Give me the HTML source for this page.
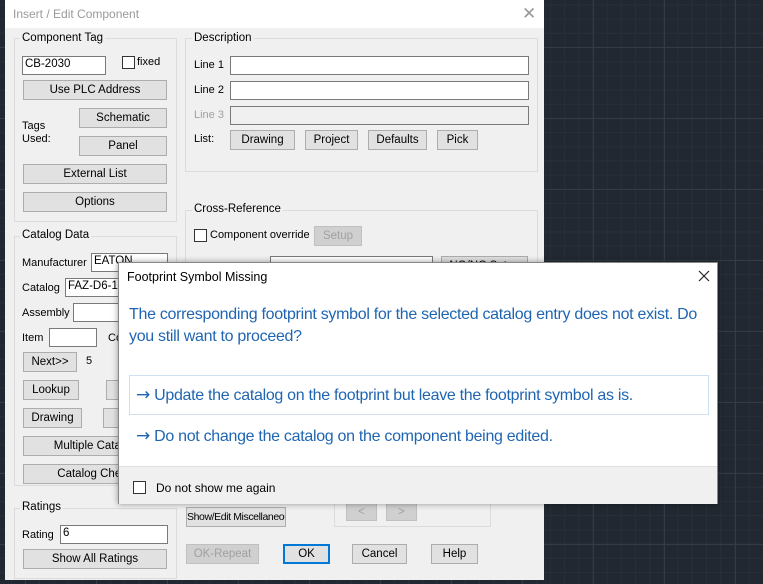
<!DOCTYPE html>
<html><head><meta charset="utf-8"><style>
*{box-sizing:border-box;margin:0;padding:0}
body{width:763px;height:584px;overflow:hidden;position:relative;font-family:"Liberation Sans",sans-serif;font-size:11px;color:#000;
background-color:#222831;
background-image:linear-gradient(#333b46 1px,transparent 1px),linear-gradient(90deg,#333b46 1px,transparent 1px),linear-gradient(#282f38 1px,transparent 1px),linear-gradient(90deg,#282f38 1px,transparent 1px);
background-size:71px 71px,71px 71px,14.2px 14.2px,14.2px 14.2px;background-position:0 47px,25px 0,0 47px,25px 0}
.a{position:absolute;white-space:nowrap}
#main{position:absolute;left:5px;top:0;width:539px;height:580px;background:#f0f0f0}
.tb{position:absolute;left:5px;top:0;width:539px;height:28px;background:#fff}
.grp{position:absolute;border:1px solid #dcdcdc}
.gl{position:absolute;background:#f0f0f0;padding:0 2px;font-size:11.5px}
.in{position:absolute;background:#fff;border:1px solid #7a7a7a;height:19px;padding:1px 2px;font-size:11.5px;overflow:hidden;white-space:nowrap}
.bt{position:absolute;background:#e1e1e1;border:1px solid #adadad;height:20px;text-align:center;line-height:18px;font-size:11.5px;white-space:nowrap;overflow:hidden}
.dis{color:#a0a0a0;background:#d0d0d0;border-color:#c0c0c0}
.cb{position:absolute;width:13px;height:13px;border:1px solid #333;background:#fff}
#pop{position:absolute;left:118px;top:262px;width:600px;height:242px;background:#fff;border:1px solid #888;box-shadow:0 0 6px rgba(0,0,0,.4)}
.bl{color:#1f65b2;font-size:16px;font-family:"Liberation Sans",sans-serif;letter-spacing:-0.3px}
.ar{font-family:"DejaVu Sans",sans-serif;font-size:17px}
</style></head><body>
<div id="main"></div>
<div class="tb"></div>
<div class="a" style="left:13px;top:7px;color:#999;font-size:12px">Insert / Edit Component</div>
<div class="a" style="left:522px;top:4px;color:#999;font-size:17px">✕</div>

<div class="grp" style="left:14px;top:38px;width:163px;height:184px"></div>
<div class="gl" style="left:20px;top:32px">Component Tag</div>
<div class="in" style="left:22px;top:56px;width:84px">CB-2030</div>
<div class="cb" style="left:122px;top:56px"></div><div class="a" style="left:137px;top:56px">fixed</div>
<div class="bt" style="left:23px;top:80px;width:144px">Use PLC Address</div>
<div class="a" style="left:22px;top:120px;line-height:13px">Tags<br>Used:</div>
<div class="bt" style="left:79px;top:108px;width:88px">Schematic</div>
<div class="bt" style="left:79px;top:136px;width:88px">Panel</div>
<div class="bt" style="left:23px;top:164px;width:144px">External List</div>
<div class="bt" style="left:23px;top:192px;width:144px">Options</div>

<div class="grp" style="left:14px;top:236px;width:163px;height:250px"></div>
<div class="gl" style="left:20px;top:229px">Catalog Data</div>
<div class="a" style="left:22px;top:257px">Manufacturer</div><div class="in" style="left:91px;top:253px;width:77px">EATON</div>
<div class="a" style="left:22px;top:282px">Catalog</div><div class="in" style="left:65px;top:278px;width:103px">FAZ-D6-1-</div>
<div class="a" style="left:22px;top:307px">Assembly</div><div class="in" style="left:73px;top:303px;width:95px"></div>
<div class="a" style="left:22px;top:332px">Item</div><div class="in" style="left:49px;top:328px;width:48px"></div><div class="a" style="left:108px;top:332px">Co</div>
<div class="bt" style="left:23px;top:352px;width:54px">Next&gt;&gt;</div><div class="a" style="left:86px;top:355px">5</div>
<div class="bt" style="left:23px;top:380px;width:56px">Lookup</div><div class="bt" style="left:106px;top:380px;width:50px"></div>
<div class="bt" style="left:23px;top:408px;width:59px">Drawing</div><div class="bt" style="left:103px;top:408px;width:50px"></div>
<div class="bt" style="left:23px;top:436px;width:144px">Multiple Catalog</div>
<div class="bt" style="left:23px;top:464px;width:144px">Catalog Check</div>

<div class="grp" style="left:14px;top:508px;width:163px;height:71px"></div>
<div class="gl" style="left:20px;top:501px">Ratings</div>
<div class="a" style="left:22px;top:529px">Rating</div><div class="in" style="left:60px;top:525px;width:108px">6</div>
<div class="bt" style="left:23px;top:549px;width:144px">Show All Ratings</div>

<div class="grp" style="left:185px;top:38px;width:353px;height:134px"></div>
<div class="gl" style="left:192px;top:32px">Description</div>
<div class="a" style="left:194px;top:59px">Line 1</div><div class="in" style="left:230px;top:56px;width:299px"></div>
<div class="a" style="left:194px;top:84px">Line 2</div><div class="in" style="left:230px;top:81px;width:299px"></div>
<div class="a" style="left:194px;top:109px;color:#a0a0a0">Line 3</div><div class="in" style="left:230px;top:106px;width:299px;background:#f0f0f0"></div>
<div class="a" style="left:194px;top:133px">List:</div>
<div class="bt" style="left:230px;top:130px;width:65px">Drawing</div>
<div class="bt" style="left:305px;top:130px;width:53px">Project</div>
<div class="bt" style="left:368px;top:130px;width:59px">Defaults</div>
<div class="bt" style="left:437px;top:130px;width:41px">Pick</div>

<div class="grp" style="left:185px;top:210px;width:353px;height:60px"></div>
<div class="gl" style="left:192px;top:203px">Cross-Reference</div>
<div class="cb" style="left:194px;top:229px"></div><div class="a" style="left:210px;top:229px">Component override</div>
<div class="bt dis" style="left:314px;top:226px;width:48px">Setup</div>
<div class="in" style="left:270px;top:256px;width:163px"></div>
<div class="bt" style="left:441px;top:256px;width:87px">NO/NC Setup</div>

<div class="bt" style="left:186px;top:507px;width:100px;font-size:10.5px;letter-spacing:-0.4px">Show/Edit Miscellaneous</div>
<div class="grp" style="left:334px;top:497px;width:157px;height:30px"></div>
<div class="bt dis" style="left:346px;top:503px;width:31px;height:18px;line-height:16px">&lt;</div>
<div class="bt dis" style="left:386px;top:503px;width:31px;height:18px;line-height:16px">&gt;</div>
<div class="bt dis" style="left:186px;top:544px;width:73px">OK-Repeat</div>
<div class="bt" style="left:283px;top:544px;width:47px;border:2px solid #0078d7;line-height:16px">OK</div>
<div class="bt" style="left:352px;top:544px;width:55px">Cancel</div>
<div class="bt" style="left:431px;top:544px;width:47px">Help</div>

<div id="pop">
 <div class="a" style="left:8px;top:7px;font-size:12.5px">Footprint Symbol Missing</div>
 <svg class="a" style="left:579px;top:7px" width="12" height="12" viewBox="0 0 12 12"><path d="M1 1L11 11M11 1L1 11" stroke="#222" stroke-width="1.2"/></svg>
 <div class="a bl" style="left:10px;top:41px;line-height:22px;white-space:normal;width:592px">The corresponding footprint symbol for the selected catalog entry does not exist. Do you still want to proceed?</div>
 <div class="a" style="left:10px;top:112px;width:580px;height:40px;border:1px solid #cfe0f0"></div>
 <div class="a bl" style="left:17px;top:122px"><span class="ar">→</span> Update the catalog on the footprint but leave the footprint symbol as is.</div>
 <div class="a bl" style="left:17px;top:163px"><span class="ar">→</span> Do not change the catalog on the component being edited.</div>
 <div class="a" style="left:0;top:203px;width:598px;height:38px;background:#f0f0f0;border-top:1px solid #e0e0e0"></div>
 <div class="cb" style="left:14px;top:218px"></div>
 <div class="a" style="left:37px;top:218px;font-size:12px">Do not show me again</div>
</div>
</body></html>
